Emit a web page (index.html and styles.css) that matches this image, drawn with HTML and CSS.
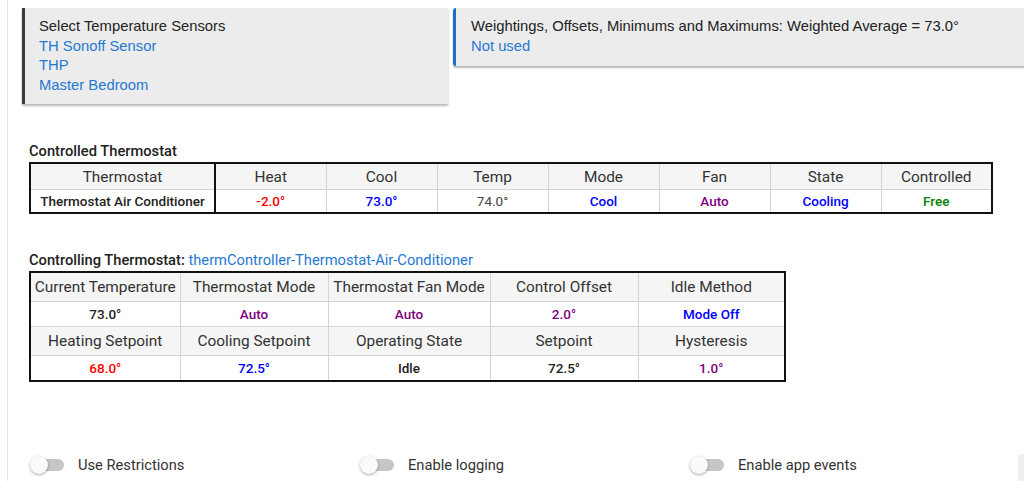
FILE: index.html
```html
<!DOCTYPE html>
<html>
<head>
<meta charset="utf-8">
<link rel="stylesheet" href="styles.css">
</head>
<body>
<div class="page">
  <div class="cards">
    <div class="card card-dark">
      <div class="card-title">Select Temperature Sensors</div>
      <div class="card-link">TH Sonoff Sensor</div>
      <div class="card-link">THP</div>
      <div class="card-link">Master Bedroom</div>
    </div>
    <div class="card card-blue">
      <div class="card-title">Weightings, Offsets, Minimums and Maximums: Weighted Average = 73.0°</div>
      <div class="card-link">Not used</div>
    </div>
  </div>

  <section class="block block-first">
    <div class="heading">Controlled Thermostat</div>
    <table class="tbl tbl1">
      <colgroup>
        <col class="c-first"><col class="c-std"><col class="c-std"><col class="c-std"><col class="c-std"><col class="c-std"><col class="c-std"><col class="c-std">
      </colgroup>
      <tr class="hdr">
        <td class="first">Thermostat</td><td>Heat</td><td>Cool</td><td>Temp</td><td>Mode</td><td>Fan</td><td>State</td><td>Controlled</td>
      </tr>
      <tr class="dat">
        <td class="first">Thermostat Air Conditioner</td><td class="red">-2.0°</td><td class="blue">73.0°</td><td class="plain">74.0°</td><td class="blue">Cool</td><td class="purple">Auto</td><td class="blue">Cooling</td><td class="green">Free</td>
      </tr>
    </table>
  </section>

  <section class="block block-second">
    <div class="heading">Controlling Thermostat: <span class="heading-link">thermController-Thermostat-Air-Conditioner</span></div>
    <table class="tbl tbl2">
      <colgroup>
        <col class="w150"><col class="w148"><col class="w162"><col class="w148"><col class="w147">
      </colgroup>
      <tr class="hdr">
        <td>Current Temperature</td><td>Thermostat Mode</td><td>Thermostat Fan Mode</td><td>Control Offset</td><td>Idle Method</td>
      </tr>
      <tr class="dat">
        <td>73.0°</td><td class="purple">Auto</td><td class="purple">Auto</td><td class="purple">2.0°</td><td class="blue">Mode Off</td>
      </tr>
      <tr class="hdr">
        <td>Heating Setpoint</td><td>Cooling Setpoint</td><td>Operating State</td><td>Setpoint</td><td>Hysteresis</td>
      </tr>
      <tr class="dat">
        <td class="red">68.0°</td><td class="blue">72.5°</td><td>Idle</td><td>72.5°</td><td class="purple">1.0°</td>
      </tr>
    </table>
  </section>

  <div class="toggles">
    <div class="toggle"><span class="switch"><span class="knob"></span></span><span class="tlabel">Use Restrictions</span></div>
    <div class="toggle"><span class="switch"><span class="knob"></span></span><span class="tlabel">Enable logging</span></div>
    <div class="toggle"><span class="switch"><span class="knob"></span></span><span class="tlabel">Enable app events</span></div>
    <div class="toggle"><span class="stub"></span></div>
  </div>
</div>
</body>
</html>
```

FILE: styles.css
```css
html, body {
  margin: 0;
  padding: 0;
  background: #ffffff;
  overflow: hidden;
}
body {
  width: 1024px;
  height: 481px;
  font-family: Roboto, "Liberation Sans", sans-serif;
  color: #333;
}
.page {
  margin-left: 7px;
  border-left: 1px solid #e6e6e6;
  height: 481px;
  box-sizing: border-box;
  padding-left: 14px;
  padding-top: 8px;
  overflow: hidden;
}
.cards {
  display: flex;
  gap: 5px;
  align-items: flex-start;
}
.card {
  background: #ececec;
  font-family: "Liberation Sans", Arial, sans-serif;
  font-size: 14.8px;
  line-height: 19.5px;
  color: #222;
  box-shadow: 0 2px 2px rgba(0, 0, 0, 0.28);
  box-sizing: border-box;
  flex-shrink: 0;
}
.card-dark {
  width: 426px;
  border-left: 3px solid #3a3a3a;
  padding: 9px 14px 9px 14px;
}
.card-blue {
  width: 580px;
  border-left: 3px solid #1e6fc8;
  border-top-left-radius: 3px;
  border-bottom-left-radius: 3px;
  padding: 9px 14px 10px 15px;
}
.card-link {
  color: #1f78d1;
}
.block-first {
  margin-top: 38px;
  margin-left: 7px;
}
.block-second {
  margin-top: 37px;
  margin-left: 7px;
}
.heading {
  font-size: 14.7px;
  font-weight: 500;
  color: #222;
  line-height: 18px;
  margin-bottom: 2px;
}
.heading-link {
  font-weight: 400;
  color: #1f78d1;
}
.tbl {
  border-collapse: collapse;
  table-layout: fixed;
  border: 2px solid #111;
  text-align: center;
}
.tbl td {
  border: 1px solid #d4d4d4;
  padding: 0 1px;
  white-space: nowrap;
  overflow: hidden;
}
.tbl .hdr td {
  background: #f5f5f5;
  font-size: 15.4px;
  color: #333;
}
.tbl .dat td {
  background: #ffffff;
  font-size: 13.5px;
  font-weight: 500;
  color: #222;
}
.tbl1 .hdr td { height: 25px; }
.tbl1 .dat td { height: 22px; }
.tbl2 .hdr td { height: 28px; }
.tbl2 .dat td { height: 24px; }
.tbl1 td.first {
  border-right: 2px solid #111;
}
.c-first { width: 185px; }
.c-std { width: 111px; }
.w150 { width: 150px; }
.w148 { width: 148px; }
.w162 { width: 162px; }
.w147 { width: 147px; }
.tbl .dat td.red { color: #ff0000; }
.tbl .dat td.blue { color: #0000ff; }
.tbl .dat td.purple { color: #800080; }
.tbl .dat td.green { color: #008000; }
.tbl .dat td.plain { font-weight: 400; color: #444; }

.toggles {
  display: grid;
  grid-template-columns: 330px 330px 330px 330px;
  margin-top: 72px;
  margin-left: 8px;
}
.toggle {
  display: flex;
  align-items: center;
  height: 22px;
}
.switch {
  position: relative;
  width: 32px;
  height: 12px;
  border-radius: 6px;
  background: #c6c6c6;
  margin-left: 2px;
  margin-right: 14px;
}
.knob {
  position: absolute;
  left: -2px;
  top: -3px;
  width: 18px;
  height: 18px;
  border-radius: 50%;
  background: #fafafa;
  box-shadow: 0 1px 3px rgba(0, 0, 0, 0.35);
}
.tlabel {
  font-size: 14.7px;
  color: #333;
}
.stub {
  display: block;
  width: 40px;
  height: 40px;
  margin-top: 18px;
  margin-left: -2px;
  background: #f0f0f0;
  border-radius: 3px;
}
```
